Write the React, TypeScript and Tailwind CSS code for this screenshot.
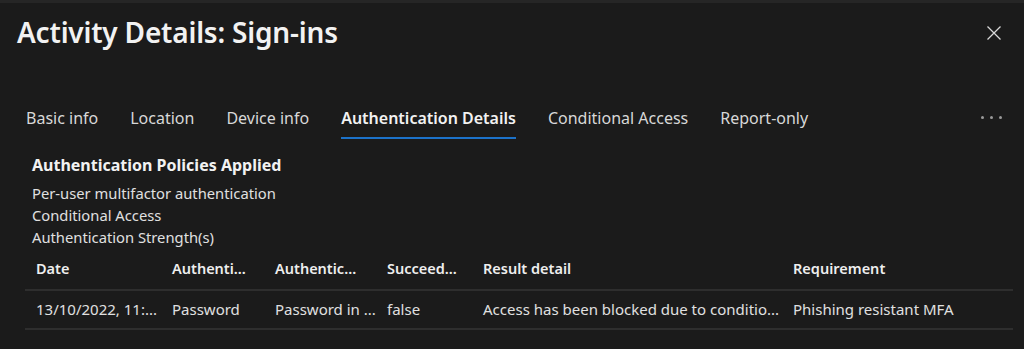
import React from "react";

const tabs = ["Basic info", "Location", "Device info", "Authentication Details", "Conditional Access", "Report-only"];

const cols = [
  { h: "Date", v: "13/10/2022, 11:...", w: "w-[136px]" },
  { h: "Authenti...", v: "Password", w: "w-[103px]" },
  { h: "Authentic...", v: "Password in ...", w: "w-[112px]" },
  { h: "Succeed...", v: "false", w: "w-[96px]" },
  { h: "Result detail", v: "Access has been blocked due to conditio...", w: "w-[310px]" },
  { h: "Requirement", v: "Phishing resistant MFA", w: "flex-1" },
];

export default function App() {
  return (
    <div
      className="w-[1024px] h-[349px] bg-[#1b1b1b] text-[#e6e6e6] overflow-hidden"
      style={{ fontFamily: '"Noto Sans", "Open Sans", sans-serif' }}
    >
      <div className="h-[3px] bg-[#262626]" />
      <div className="flex items-start justify-between pl-[17px] pr-[22px] pt-[11px]">
        <h1 className="text-[28px] leading-[36px] font-semibold text-[#f2f2f2] tracking-[-0.2px]">
          Activity Details: Sign-ins
        </h1>
        <svg width="16" height="16" viewBox="0 0 16 16" className="mt-[11px]">
          <path d="M1.5 1.5L14.5 14.5M14.5 1.5L1.5 14.5" stroke="#d8d8d8" strokeWidth="1.3" />
        </svg>
      </div>

      <div className="flex items-end pl-[26px] pr-[22px] mt-[57px]">
        <div className="flex gap-[32px]">
          {tabs.map((t, i) => (
            <div
              key={t}
              className={
                i === 3
                  ? "pb-[8px] border-b-[2px] border-[#1c72c9] text-[16px] leading-[22px] font-semibold text-[#f2f2f2]"
                  : "pb-[10px] text-[16px] leading-[22px] text-[#d8d8d8]"
              }
            >
              {t}
            </div>
          ))}
        </div>
        <div className="ml-auto pb-[20px] flex gap-[6px]">
          <span className="w-[3px] h-[3px] rounded-full bg-[#9a9a9a]" />
          <span className="w-[3px] h-[3px] rounded-full bg-[#9a9a9a]" />
          <span className="w-[3px] h-[3px] rounded-full bg-[#9a9a9a]" />
        </div>
      </div>

      <div className="pl-[32px] mt-[15px]">
        <div className="text-[16px] leading-[22px] font-bold text-[#f2f2f2]">Authentication Policies Applied</div>
        <div className="mt-[6px] text-[14.75px] leading-[22px] text-[#e0e0e0]">
          <div>Per-user multifactor authentication</div>
          <div>Conditional Access</div>
          <div>Authentication Strength(s)</div>
        </div>
      </div>

      <div className="ml-[25px] w-[988px]">
        <div className="flex border-b-[2px] border-[#2e2e2e] h-[43px] items-center">
          {cols.map((c) => (
            <div key={c.h} className={`${c.w} pl-[11px] text-[14.5px] font-semibold text-[#eeeeee] whitespace-nowrap`}>
              {c.h}
            </div>
          ))}
        </div>
        <div className="flex border-b-[2px] border-[#2e2e2e] h-[39px] items-center">
          {cols.map((c) => (
            <div key={c.h} className={`${c.w} pl-[11px] text-[15px] text-[#e0e0e0] whitespace-nowrap`}>
              {c.v}
            </div>
          ))}
        </div>
      </div>
    </div>
  );
}
